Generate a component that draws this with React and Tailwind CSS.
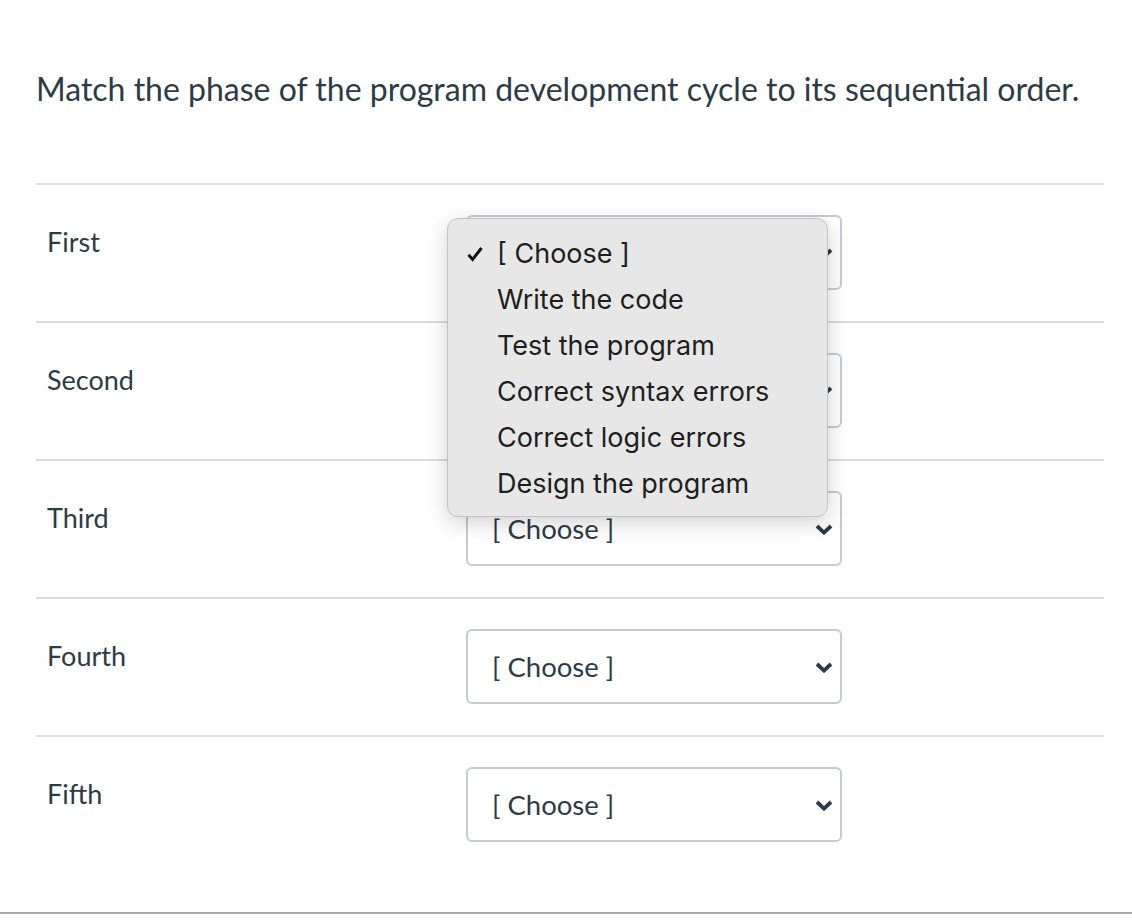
import React from "react";

const rows = ["First", "Second", "Third", "Fourth", "Fifth"];
const options = [
  "[ Choose ]",
  "Write the code",
  "Test the program",
  "Correct syntax errors",
  "Correct logic errors",
  "Design the program",
];

function Chevron() {
  return (
    <svg width="18" height="12" viewBox="0 0 18 12" className="shrink-0">
      <polyline
        points="2,3 9,9.6 16,3"
        fill="none"
        stroke="#2d3b45"
        strokeWidth="3.8"
        strokeLinecap="butt"
        strokeLinejoin="miter"
      />
    </svg>
  );
}

function Select() {
  return (
    <div className="w-[376px] h-[75px] border-2 border-[#c7cbcf] rounded-[6px] bg-white flex items-center justify-between pl-[24px] pr-[7px]">
      <span className="text-[27.5px] text-[#2d3b45]">[ Choose ]</span>
      <Chevron />
    </div>
  );
}

function Menu() {
  return (
    <div
      className="absolute left-[-19px] top-[33px] w-[381px] bg-[#e7e7e7] border border-[#c4c4c4] rounded-[11px] shadow-[0_6px_22px_rgba(0,0,0,0.18)] pt-[12px] pb-[9px] z-10"
      style={{ fontFamily: "Inter, 'Liberation Sans', sans-serif" }}
    >
      {options.map((o, i) => (
        <div key={o} className="h-[46px] flex items-center text-[27px] text-[#1e1e1e] whitespace-nowrap">
          <span className="w-[49px] shrink-0 flex justify-start pl-[19px]">
            {i === 0 ? (
              <svg width="16" height="16" viewBox="0 0 16 16">
                <polyline points="1.5,8.8 5.6,13.5 14.5,2" fill="none" stroke="#111" strokeWidth="3" />
              </svg>
            ) : null}
          </span>
          <span>{o}</span>
        </div>
      ))}
    </div>
  );
}

export default function App() {
  return (
    <div
      className="w-[1132px] h-[920px] bg-white relative overflow-hidden text-[#2d3b45]"
      style={{ fontFamily: "Lato, 'Open Sans', sans-serif" }}
    >
      <div className="px-[36px] pt-[69px]">
        <h1 className="text-[32px] leading-[40px] font-normal whitespace-nowrap">
          Match the phase of the program development cycle to its sequential order.
        </h1>
        <div className="mt-[74px] border-t-2 border-[#dadada] w-[1068px]">
          {rows.map((r, i) => (
            <div
              key={r}
              className={
                "h-[138px] flex items-start " +
                (i < rows.length - 1 ? "border-b-2 border-[#dadada]" : "")
              }
            >
              <div className="w-[430px] pl-[11px] pt-[40px] text-[27px] leading-[34px]">{r}</div>
              <div className="pt-[30px] relative">
                <Select />
                {i === 0 ? <Menu /> : null}
              </div>
            </div>
          ))}
        </div>
      </div>
      <div className="absolute left-0 right-0 top-[912px] h-[2px] bg-[#a9a9a9]" />
    </div>
  );
}
